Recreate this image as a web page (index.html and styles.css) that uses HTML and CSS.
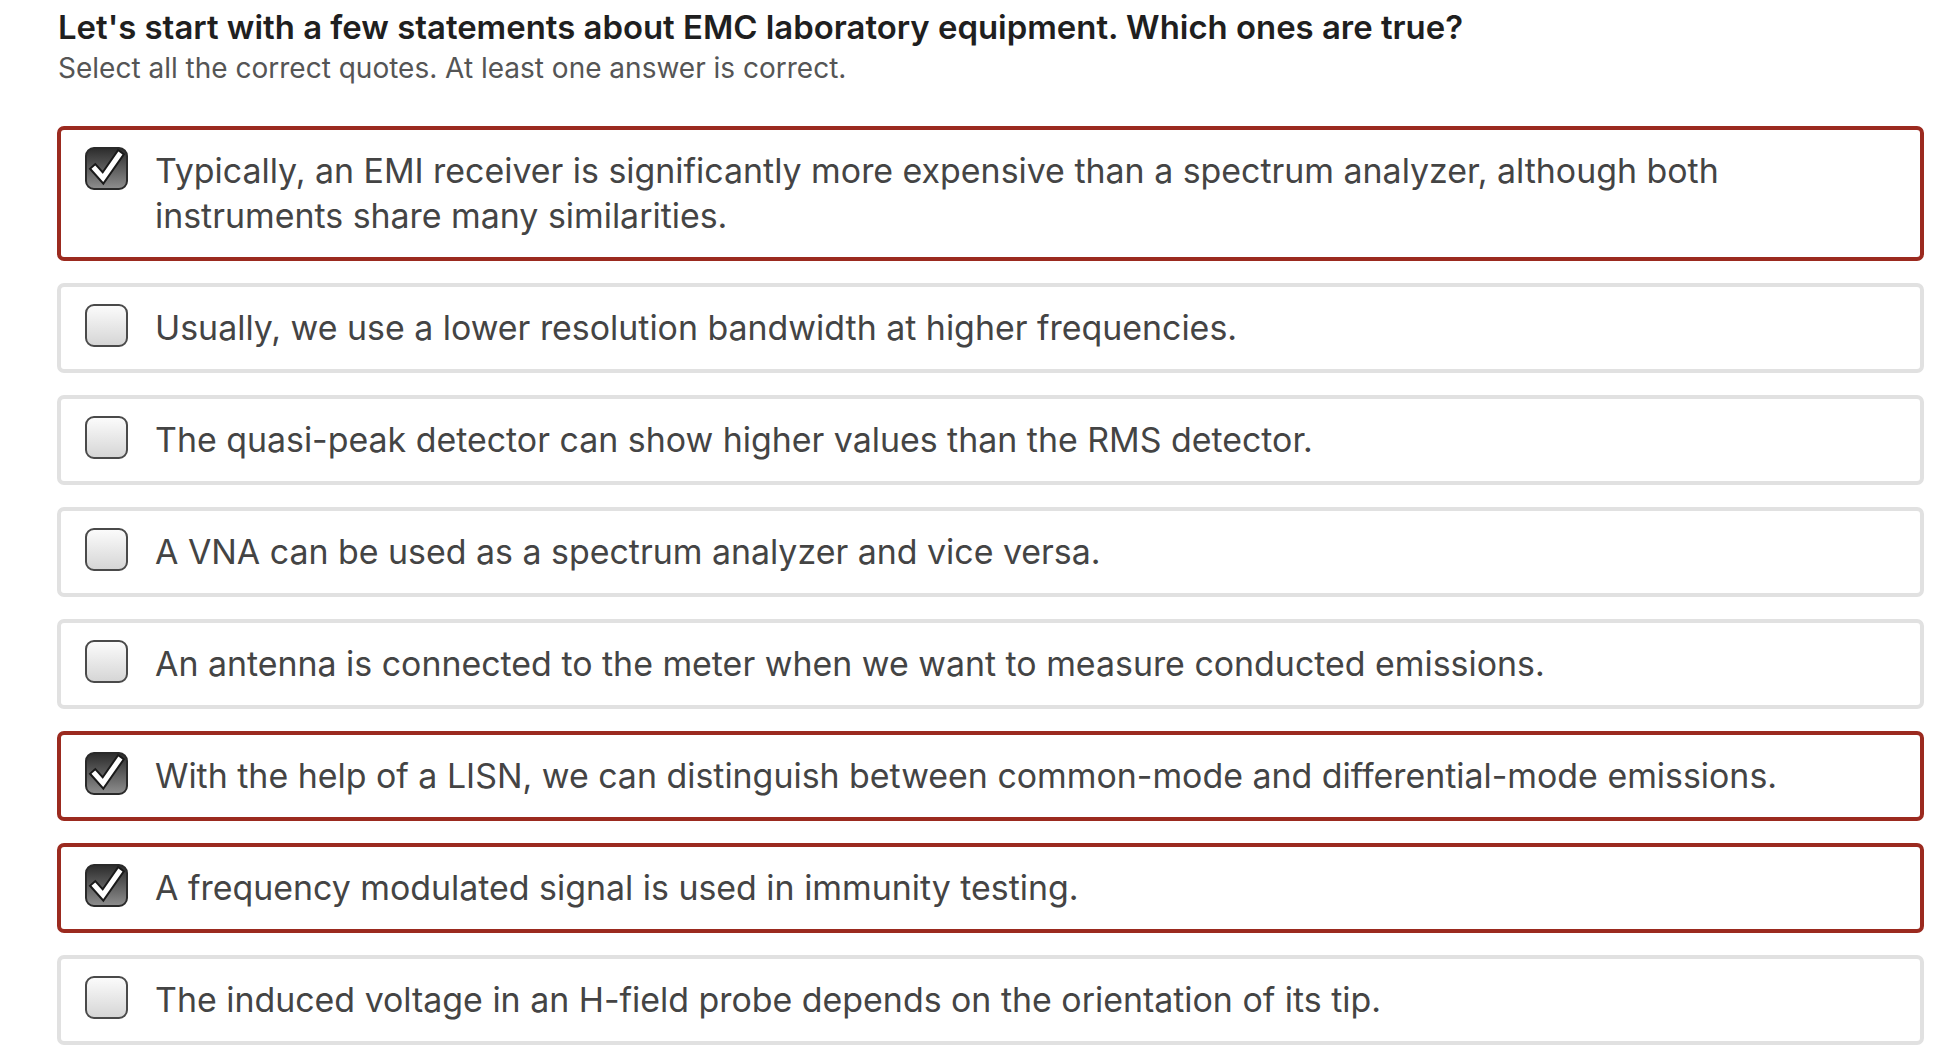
FILE: index.html
```html
<!DOCTYPE html>
<html lang="en">
<head>
<meta charset="utf-8">
<title>EMC laboratory equipment</title>
<link rel="stylesheet" href="styles.css">
</head>
<body>
<main class="quiz">
  <header class="quiz-head">
    <h1 class="quiz-title">Let's start with a few statements about EMC laboratory equipment. Which ones are true?</h1>
    <p class="quiz-sub">Select all the correct quotes. At least one answer is correct.</p>
  </header>
  <ul class="options">
    <li class="option selected">
      <span class="box checked"><svg viewBox="0 0 43 43"><path class="ck-o" d="M10 22 L18 31 L34 8"/><path class="ck-i" d="M10 22 L18 31 L34 8"/></svg></span>
      <span class="label">Typically, an EMI receiver is significantly more expensive than a spectrum analyzer, although both instruments share many similarities.</span>
    </li>
    <li class="option">
      <span class="box"></span>
      <span class="label">Usually, we use a lower resolution bandwidth at higher frequencies.</span>
    </li>
    <li class="option">
      <span class="box"></span>
      <span class="label">The quasi-peak detector can show higher values than the RMS detector.</span>
    </li>
    <li class="option">
      <span class="box"></span>
      <span class="label">A VNA can be used as a spectrum analyzer and vice versa.</span>
    </li>
    <li class="option">
      <span class="box"></span>
      <span class="label">An antenna is connected to the meter when we want to measure conducted emissions.</span>
    </li>
    <li class="option selected">
      <span class="box checked"><svg viewBox="0 0 43 43"><path class="ck-o" d="M10 22 L18 31 L34 8"/><path class="ck-i" d="M10 22 L18 31 L34 8"/></svg></span>
      <span class="label">With the help of a LISN, we can distinguish between common-mode and differential-mode emissions.</span>
    </li>
    <li class="option selected">
      <span class="box checked"><svg viewBox="0 0 43 43"><path class="ck-o" d="M10 22 L18 31 L34 8"/><path class="ck-i" d="M10 22 L18 31 L34 8"/></svg></span>
      <span class="label">A frequency modulated signal is used in immunity testing.</span>
    </li>
    <li class="option">
      <span class="box"></span>
      <span class="label">The induced voltage in an H-field probe depends on the orientation of its tip.</span>
    </li>
  </ul>
</main>
</body>
</html>
```
FILE: styles.css
```css
html, body {
  margin: 0;
  padding: 0;
  background: #ffffff;
}
body {
  font-family: Inter, "Noto Sans", "Liberation Sans", sans-serif;
  color: #444444;
}
.quiz {
  padding: 7px 24px 0 57px;
}
.quiz-head {
  padding-left: 1px;
}
.quiz-title {
  margin: 0;
  font-size: 32.9px;
  line-height: 40px;
  font-weight: 600;
  color: #1f1f1f;
}
.quiz-sub {
  margin: 4px 0 0 0;
  font-size: 28px;
  line-height: 34px;
  color: #555555;
}
.options {
  list-style: none;
  margin: 41px 0 0 0;
  padding: 0;
  display: flex;
  flex-direction: column;
  gap: 22px;
}
.option {
  display: flex;
  align-items: flex-start;
  gap: 27px;
  border: 4px solid #e1e1e1;
  border-radius: 7px;
  padding: 18px 24px 19px 24px;
}
.option.selected {
  border-color: #9b2a1f;
}
.label {
  font-size: 33.9px;
  line-height: 45px;
  color: #444444;
}
.box {
  flex: none;
  width: 39px;
  height: 39px;
  margin-top: -1px;
  border: 2px solid #4a4a4a;
  border-radius: 9px;
  background: linear-gradient(#fbfbfb, #d6d6d6);
  position: relative;
}
.box.checked {
  background: linear-gradient(#2e2e2e, #8c8c8c);
  border-color: #2a2a2a;
}
.box svg {
  position: absolute;
  left: -2px;
  top: -2px;
  width: 43px;
  height: 43px;
  overflow: visible;
}
.ck-o {
  fill: none;
  stroke: #1a1a1a;
  stroke-width: 9;
  stroke-linecap: square;
  stroke-linejoin: miter;
}
.ck-i {
  fill: none;
  stroke: #ffffff;
  stroke-width: 5;
  stroke-linecap: square;
  stroke-linejoin: miter;
}
```
